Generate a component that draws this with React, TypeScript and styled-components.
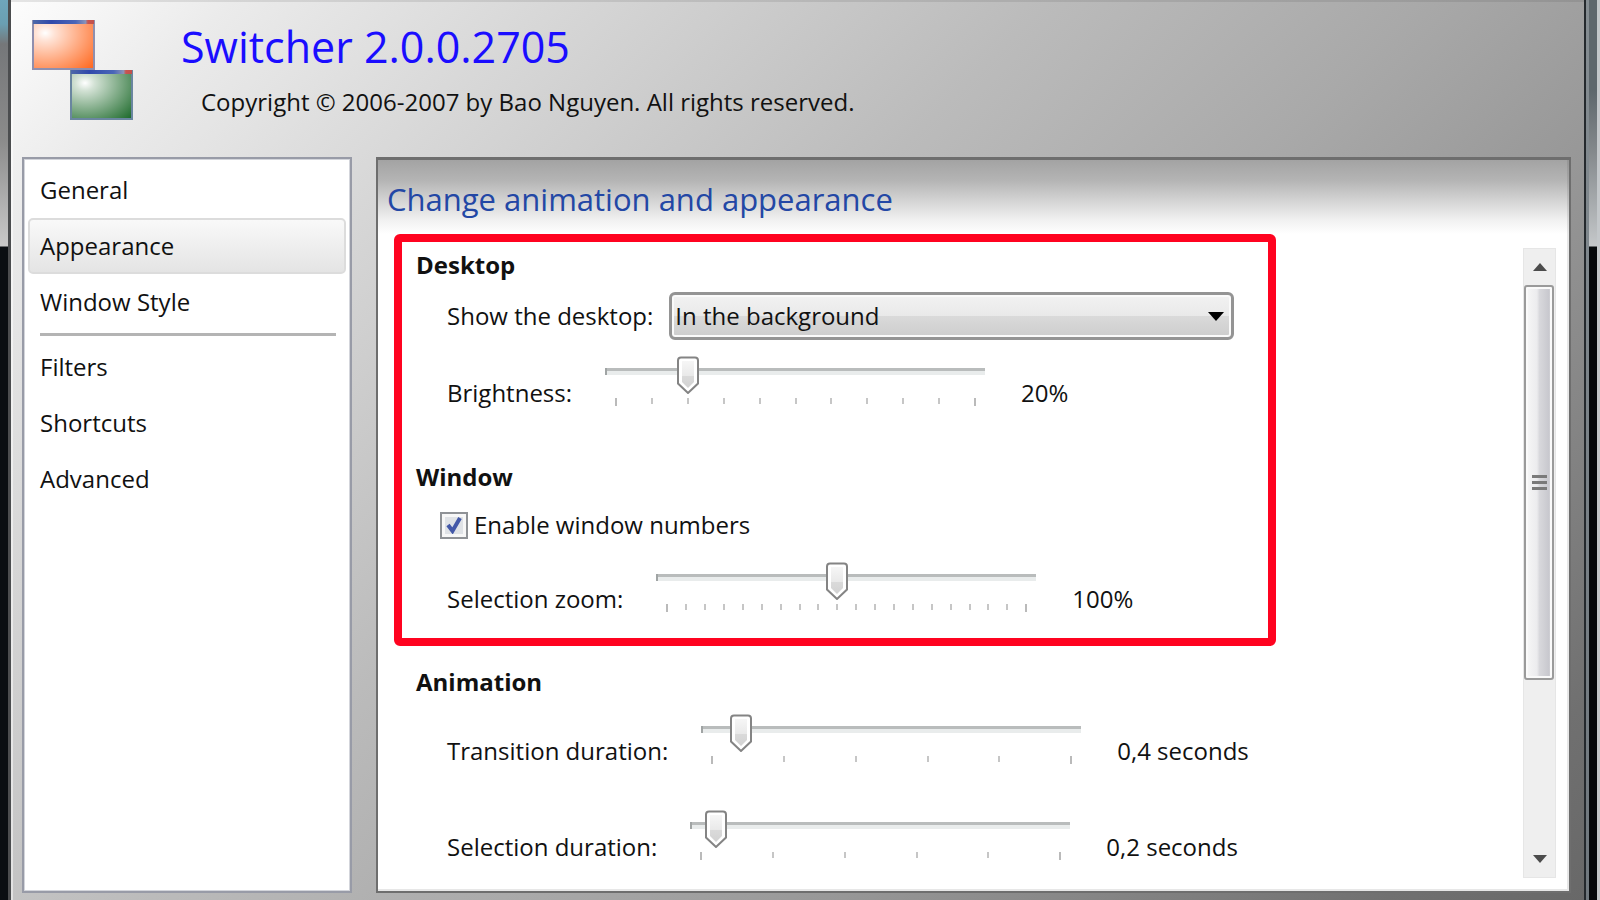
import React, { useId, useState } from "react";
import styled, { createGlobalStyle, css } from "styled-components";

const GlobalStyle = createGlobalStyle`
  *, *::before, *::after { box-sizing: border-box; }
  body {
    margin: 0;
    background: #0a0e12;
    color: #111;
    font: 24px/32px "Open Sans", "Noto Sans", sans-serif;
  }
  button, input, select { font: inherit; color: inherit; }
`;

const thumbImage = `url("data:image/svg+xml,${encodeURIComponent(
  `<svg xmlns="http://www.w3.org/2000/svg" width="22" height="38" viewBox="0 0 22 38"><defs><linearGradient id="g" x1="0" y1="0" x2="0" y2="1"><stop offset="0" stop-color="#f6f6f6"/><stop offset=".55" stop-color="#e9e9e9"/><stop offset=".57" stop-color="#dadada"/><stop offset="1" stop-color="#d2d2d2"/></linearGradient></defs><path d="M4 1.500h14q3 0 3 3v23L11 37 1 27.500v-23q0-3 3-3z" fill="#fff" stroke="#848484" stroke-width="2"/><path d="M5 5h12v21l-6 6-6-6z" fill="url(#g)"/></svg>`
)}")`;

const Desktop = styled.div`
  display: flex;
  min-height: 100vh;
`;

const EdgeLeft = styled.div`
  flex: none;
  width: 11px;
  border-right: 3px solid #4b4d4f;
  background: linear-gradient(#6fa6bb 0, #6a9fb2 24px, #757779 44px, #8b8b8b 140px, #c9c9c9 246px, #0a0e12 247px);
`;

const EdgeRight = styled.div`
  flex: none;
  width: 16px;
  border-left: 2px solid #24292d;
  border-right: 3px solid #c3c7ca;
  background:
    linear-gradient(#858d92, #70787e) 0 0 / 3px 100% no-repeat,
    linear-gradient(#5e676c 0, #5e676c 90px, #83888b 150px, #c4c7c9 246px, #06090c 247px);
`;

const Window = styled.div`
  flex: 1;
  min-width: 0;
  display: flex;
  flex-direction: column;
  background: linear-gradient(135deg, #fdfdfd 0, #ebebeb 9%, #d9d9d9 21%, #bbb 42%, #a9a9a9 57%, #979797 70%, #707070 92%, #686868 100%);
  box-shadow: inset 0 2px 0 rgba(60, 60, 60, 0.12), inset 2px 0 0 rgba(255, 255, 255, 0.5);
`;

const Header = styled.header`
  flex: none;
  display: flex;
  height: 157px;
  padding: 19px 21px 0;
`;

const Logo = styled.svg`
  flex: none;
  width: 102px;
  height: 102px;
`;

const Titles = styled.div`
  margin-left: 47px;
  white-space: nowrap;
`;

const AppTitle = styled.h1`
  margin: 0;
  color: #1a0dff;
  font-size: 43px;
  font-weight: 400;
  line-height: 56px;
`;

const Copyright = styled.p`
  margin: 11px 0 0 20px;
`;

const Body = styled.div`
  flex: 1;
  display: flex;
  gap: 24px;
  padding: 0 13px 7px 11px;
`;

const Sidebar = styled.nav`
  flex: none;
  width: 330px;
  padding: 3px 4px;
  border: 2px solid #989ba7;
  background: #fff;
  box-shadow: inset 0 0 0 1px #d3d5db;
`;

const NavItem = styled.button<{ $active?: boolean }>`
  display: block;
  width: 100%;
  height: 56px;
  padding: 0 10px;
  border: 2px solid transparent;
  border-radius: 5px;
  background: none;
  text-align: left;
  ${(p) =>
    p.$active &&
    css`
      border-color: #dcdcdc;
      background: linear-gradient(#f9f9f9, #e4e4e4);
    `}
`;

const Divider = styled.hr`
  height: 3px;
  margin: 3px 10px 3px 12px;
  border: 0;
  background: #b4b4b4;
`;

const Panel = styled.main`
  flex: 1;
  min-width: 0;
  display: flex;
  flex-direction: column;
  border: solid #6e6e6e;
  border-width: 3px 2px 2px;
  background: linear-gradient(#a3a3a3 0, #b4b4b4 20px, #f1f1f1 60px, #fff 74px);
  box-shadow: inset -2px -2px 0 rgba(60, 60, 60, 0.12);
`;

const PanelTitle = styled.h2`
  margin: 19px 9px 0;
  color: #2347a5;
  font-size: 31px;
  font-weight: 400;
  line-height: 40px;
`;

const PanelContent = styled.div`
  flex: 1;
  display: flex;
  justify-content: space-between;
  padding: 15px 13px 0 16px;
`;

const Settings = styled.form`
  flex: 0 1 882px;
`;

const Highlight = styled.div`
  padding: 7px 14px 23px;
  border: 8px solid #ff0320;
  border-radius: 6px;
`;

const Group = styled.fieldset<{ $top?: number }>`
  min-width: 0;
  margin: ${(p) => p.$top ?? 0}px 0 0;
  padding: 0;
  border: 0;
`;

const PlainGroup = styled(Group)`
  padding: 0 22px;
`;

const Heading = styled.legend`
  padding: 0;
  font-weight: 700;
`;

const Row = styled.div<{ $top: number; $align?: string }>`
  display: flex;
  align-items: ${(p) => p.$align ?? "flex-end"};
  margin-top: ${(p) => p.$top}px;
  padding-left: 31px;
  white-space: nowrap;
`;

const CheckRow = styled(Row)`
  padding-left: 24px;
`;

const SelectWrap = styled.div`
  flex: 1;
  display: grid;
  align-items: center;
  margin: 0 20px 0 16px;

  > * { grid-area: 1 / 1; }
`;

const Select = styled.select`
  width: 100%;
  height: 48px;
  padding: 0 3px;
  appearance: none;
  border: 3px solid #949494;
  border-radius: 6px;
  background: linear-gradient(#f2f2f2 0, #e9e9e9 50%, #dadada 50%, #cdcdcd 100%);
  box-shadow: inset 0 0 0 2px #fafafa;
`;

const SelectArrow = styled.svg`
  width: 16px;
  height: 9px;
  margin-right: 10px;
  justify-self: end;
  pointer-events: none;
`;

const Checkbox = styled.input`
  width: 28px;
  height: 27px;
  margin: 0 6px 0 0;
  appearance: none;
  border: 2px solid #8f9296;
  background: #dfe2e6;
  box-shadow: inset 0 0 0 3px #f7f7f7;

  &:checked {
    background: url("data:image/svg+xml,${encodeURIComponent(
      `<svg xmlns="http://www.w3.org/2000/svg" viewBox="0 0 24 23"><path d="M6 11l4.500 6L18 4" fill="none" stroke="#4358a8" stroke-width="4"/></svg>`
    )}") center / 24px 23px no-repeat #dfe2e6;
  }
`;

const SliderWrap = styled.div`
  flex: none;
  width: 380px;
  height: 53px;
  margin: 0 36px 0 33px;
`;

const Range = styled.input`
  display: block;
  width: 100%;
  height: 38px;
  margin: 0;
  appearance: none;
  background: none;

  &::-webkit-slider-runnable-track {
    height: 38px;
    background:
      linear-gradient(#a0a4a4, #a0a4a4) 0 12px / 2px 7px no-repeat,
      linear-gradient(#b9bcbc 0 3px, #e9ecec 3px 7px) 0 12px / 100% 7px no-repeat;
  }

  &::-webkit-slider-thumb {
    width: 22px;
    height: 38px;
    appearance: none;
    background: ${thumbImage} center / 22px 38px no-repeat;
  }
`;

const Ticks = styled.div`
  display: flex;
  justify-content: space-between;
  margin: 4px 9px 0 10px;
`;

const Tick = styled.span`
  width: 2px;
  height: 6px;
  background: #c6c6c6;

  &:first-child, &:last-child {
    height: 8px;
    background: #bababa;
  }
`;

const ScrollBar = styled.div`
  flex: none;
  display: flex;
  flex-direction: column;
  width: 33px;
  margin: 14px 0 13px;
  border: 1px solid #e6e6e6;
  background: #efefef;
`;

const ScrollButton = styled.button`
  flex: none;
  display: flex;
  align-items: center;
  justify-content: center;
  height: 36px;
  padding: 0;
  border: 0;
  background: none;
`;

const ScrollTrack = styled.div`
  flex: 1;
  min-height: 0;
`;

const ScrollThumb = styled.div`
  display: flex;
  align-items: center;
  justify-content: center;
  width: 30px;
  height: 71%;
  border: 2px solid #9a9a9a;
  border-radius: 3px;
  background: linear-gradient(90deg, #f7f7f7 0, #ececee 42%, #d8d8dc 52%, #c8c8ce 88%, #e4e4e4 100%);
  box-shadow: inset 0 0 0 2px #fafafa;
`;

function Slider(props: {
  label: string;
  top: number;
  min: number;
  max: number;
  step: number;
  initial: number;
  ticks: number;
  format: (v: number) => string;
}) {
  const id = useId();
  const [value, setValue] = useState(props.initial);
  return (
    <Row $top={props.top}>
      <label htmlFor={id}>{props.label}</label>
      <SliderWrap>
        <Range
          id={id}
          type="range"
          min={props.min}
          max={props.max}
          step={props.step}
          value={value}
          onChange={(e) => setValue(Number(e.target.value))}
        />
        <Ticks aria-hidden="true">
          {Array.from({ length: props.ticks }, (_, i) => (
            <Tick key={i} />
          ))}
        </Ticks>
      </SliderWrap>
      <output htmlFor={id}>{props.format(value)}</output>
    </Row>
  );
}

const percent = (v: number) => `${v}%`;
const seconds = (v: number) => `${String(v).replace(".", ",")} seconds`;

const pages = ["General", "Appearance", "Window Style", null, "Filters", "Shortcuts", "Advanced"];

export default function App() {
  const [page, setPage] = useState("Appearance");
  const [numbers, setNumbers] = useState(true);
  return (
    <>
      <GlobalStyle />
      <Desktop>
        <EdgeLeft />
        <Window>
          <Header>
            <Logo viewBox="0 0 102 102" aria-hidden="true">
              <defs>
                <radialGradient id="orange" cx="0.2" cy="0.25" r="1.05">
                  <stop offset="0" stopColor="#fff" />
                  <stop offset="0.15" stopColor="#ffe3d6" />
                  <stop offset="1" stopColor="#ff6a22" />
                </radialGradient>
                <radialGradient id="green" cx="0.23" cy="0.25" r="1.05">
                  <stop offset="0" stopColor="#fff" />
                  <stop offset="0.15" stopColor="#d3e2d5" />
                  <stop offset="1" stopColor="#1d6a2b" />
                </radialGradient>
                <linearGradient id="caption">
                  <stop offset="0" stopColor="#4d68a8" />
                  <stop offset="0.3" stopColor="#3049ab" />
                  <stop offset="0.7" stopColor="#4a66b8" />
                  <stop offset="0.86" stopColor="#8a93b8" />
                  <stop offset="0.9" stopColor="#c8554f" />
                  <stop offset="1" stopColor="#c0504d" />
                </linearGradient>
              </defs>
              <rect x="1" y="2" width="61" height="48" fill="url(#orange)" stroke="#8f8fae" strokeWidth="2" />
              <rect x="1" y="1" width="61" height="4" fill="url(#caption)" />
              <rect x="39" y="52" width="61" height="48" fill="url(#green)" stroke="#6a86a0" strokeWidth="2" />
              <rect x="39" y="51" width="61" height="4" fill="url(#caption)" />
            </Logo>
            <Titles>
              <AppTitle>Switcher 2.0.0.2705</AppTitle>
              <Copyright>Copyright © 2006-2007 by Bao Nguyen. All rights reserved.</Copyright>
            </Titles>
          </Header>
          <Body>
            <Sidebar>
              {pages.map((name) =>
                name ? (
                  <NavItem key={name} type="button" $active={name === page} onClick={() => setPage(name)}>
                    {name}
                  </NavItem>
                ) : (
                  <Divider key="divider" />
                )
              )}
            </Sidebar>
            <Panel>
              <PanelTitle>Change animation and appearance</PanelTitle>
              <PanelContent>
                <Settings>
                  <Highlight>
                    <Group>
                      <Heading>Desktop</Heading>
                      <Row $top={11} $align="center">
                        <label htmlFor="show-desktop">Show the desktop:</label>
                        <SelectWrap>
                          <Select id="show-desktop" defaultValue="background">
                            <option value="background">In the background</option>
                          </Select>
                          <SelectArrow viewBox="0 0 16 9" aria-hidden="true">
                            <path d="M0 0h16L8 9z" />
                          </SelectArrow>
                        </SelectWrap>
                      </Row>
                      <Slider label="Brightness:" top={16} min={0} max={100} step={10} initial={20} ticks={11} format={percent} />
                    </Group>
                    <Group $top={52}>
                      <Heading>Window</Heading>
                      <CheckRow $top={16} $align="center">
                        <Checkbox
                          id="numbers"
                          type="checkbox"
                          checked={numbers}
                          onChange={(e) => setNumbers(e.target.checked)}
                        />
                        <label htmlFor="numbers">Enable window numbers</label>
                      </CheckRow>
                      <Slider label="Selection zoom:" top={21} min={10} max={200} step={10} initial={100} ticks={20} format={percent} />
                    </Group>
                  </Highlight>
                  <PlainGroup $top={20}>
                    <Heading>Animation</Heading>
                    <Slider label="Transition duration:" top={16} min={0} max={5} step={0.1} initial={0.4} ticks={6} format={seconds} />
                    <Slider label="Selection duration:" top={43} min={0} max={5} step={0.1} initial={0.2} ticks={6} format={seconds} />
                  </PlainGroup>
                </Settings>
                <ScrollBar>
                  <ScrollButton type="button" aria-label="Scroll up">
                    <svg width="14" height="8" viewBox="0 0 14 8">
                      <path d="M0 8h14L7 0z" fill="#4c4c4c" />
                    </svg>
                  </ScrollButton>
                  <ScrollTrack>
                    <ScrollThumb>
                      <svg width="15" height="17" viewBox="0 0 15 17">
                        <path d="M0 2.500h15M0 8.500h15M0 14.500h15" stroke="#7a7a7a" strokeWidth="3" />
                      </svg>
                    </ScrollThumb>
                  </ScrollTrack>
                  <ScrollButton type="button" aria-label="Scroll down">
                    <svg width="14" height="8" viewBox="0 0 14 8">
                      <path d="M0 0h14L7 8z" fill="#4c4c4c" />
                    </svg>
                  </ScrollButton>
                </ScrollBar>
              </PanelContent>
            </Panel>
          </Body>
        </Window>
        <EdgeRight />
      </Desktop>
    </>
  );
}
